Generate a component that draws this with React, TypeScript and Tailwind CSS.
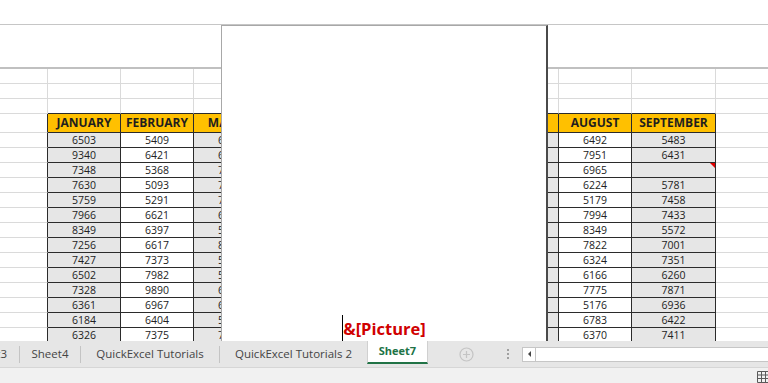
import React from 'react';

type Col = { w: string; month?: string; gray?: boolean; values?: string[] };

const cols: Col[] = [
  { w: 'w-[48px]' },
  { w: 'w-[73px]', month: 'JANUARY', gray: true, values: ['6503', '9340', '7348', '7630', '5759', '7966', '8349', '7256', '7427', '6502', '7328', '6361', '6184', '6326'] },
  { w: 'w-[73px]', month: 'FEBRUARY', values: ['5409', '6421', '5368', '5093', '5291', '6621', '6397', '6617', '7373', '7982', '9890', '6967', '6404', '7375'] },
  { w: 'w-[73px]', month: 'MARCH', gray: true, values: ['6120', '6874', '7012', '7455', '7301', '6590', '5842', '8013', '5267', '5731', '6088', '6649', '5390', '7204'] },
  // April to July sit under the header picture box, nothing of them shows
  { w: 'w-[73px]', month: 'APRIL' },
  { w: 'w-[73px]', month: 'MAY', gray: true },
  { w: 'w-[73px]', month: 'JUNE' },
  { w: 'w-[73px]', month: 'JULY', gray: true },
  { w: 'w-[73px]', month: 'AUGUST', values: ['6492', '7951', '6965', '6224', '5179', '7994', '8349', '7822', '6324', '6166', '7775', '5176', '6783', '6370'] },
  { w: 'w-[84px]', month: 'SEPTEMBER', gray: true, values: ['5483', '6431', '', '5781', '7458', '7433', '5572', '7001', '7351', '6260', '7871', '6936', '6422', '7411'] },
  { w: 'w-[80px]' },
];

type Kind = 'blank' | 'edge' | 'header' | 'data';

function Cell({ col, index, kind, row }: { col: Col; index: number; kind: Kind; row: number }) {
  const inTable = index >= 1 && index <= 9;
  const tableRow = kind === 'header' || kind === 'data';
  const bottom = inTable && kind !== 'blank' ? 'border-b-[#2b2b2b]' : 'border-b-[#dadada]';
  const right = tableRow && index <= 9 ? 'border-r-[#2b2b2b]' : 'border-r-[#dadada]';
  let bg = 'bg-white';
  if (inTable && kind === 'header') bg = 'bg-[#ffc000]';
  else if (inTable && kind === 'data' && col.gray) bg = 'bg-[#e6e6e6]';

  let content: React.ReactNode = null;
  if (inTable && kind === 'header') {
    content = <span className="text-[12px] font-bold text-[#1e1e1e] leading-none">{col.month}</span>;
  } else if (inTable && kind === 'data' && col.values) {
    content = <span className="text-[10.5px] text-[#222] leading-none">{col.values[row]}</span>;
  }

  const comment = index === 9 && kind === 'data' && row === 2;

  return (
    <div className={`relative flex shrink-0 items-center justify-center border-r border-b ${col.w} ${bottom} ${right} ${bg}`}>
      {content}
      {comment && (
        <span className="absolute right-0 top-0 h-0 w-0 border-t-[5px] border-l-[5px] border-t-[#e00000] border-l-transparent" />
      )}
    </div>
  );
}

function Row({ kind, row = 0 }: { kind: Kind; row?: number }) {
  const h = kind === 'header' ? 'h-[19px]' : 'h-[15px]';
  return (
    <div className={`flex shrink-0 ${h}`}>
      {cols.map((c, i) => (
        <Cell key={i} col={c} index={i} kind={kind} row={row} />
      ))}
    </div>
  );
}

export default function App() {
  return (
    <div className="relative flex h-[383px] w-[768px] flex-col overflow-hidden bg-white font-['Open_Sans',sans-serif]">
      {/* page margin + header band */}
      <div className="h-[25px] shrink-0 border-b border-[#c6c6c6]" />
      <div className="h-[44px] shrink-0 border-b-2 border-[#c0c0c0]" />

      {/* sheet grid */}
      <div className="flex h-[272px] shrink-0 flex-col overflow-hidden">
        <Row kind="blank" />
        <Row kind="blank" />
        <Row kind="edge" />
        <Row kind="header" />
        {Array.from({ length: 14 }).map((_, i) => (
          <Row key={i} kind="data" row={i} />
        ))}
      </div>

      {/* header picture box over the sheet */}
      <div className="absolute left-[221px] top-[25px] flex h-[316px] w-[327px] flex-col items-center justify-end border-l border-t border-r-2 border-l-[#a8a8a8] border-t-[#a8a8a8] border-r-[#4a4a4a] bg-white">
        <div className="flex items-end">
          <span className="h-[26px] w-px bg-black" />
          <span className="mb-[4px] text-[16.5px] font-bold leading-none text-[#d00000]">&amp;[Picture]</span>
        </div>
      </div>

      {/* sheet tabs */}
      <div className="flex h-[26px] shrink-0 items-center bg-[#e6e6e6] text-[11.5px] text-[#444]">
        <div className="flex w-[19px] shrink-0 justify-end overflow-hidden pr-[12px]">
          <span className="whitespace-nowrap">Sheet3</span>
        </div>
        <span className="h-[17px] w-px shrink-0 bg-[#c4c4c4]" />
        <div className="flex w-[60px] shrink-0 justify-center">Sheet4</div>
        <span className="h-[17px] w-px shrink-0 bg-[#c4c4c4]" />
        <div className="flex w-[138px] shrink-0 justify-center whitespace-nowrap">QuickExcel Tutorials</div>
        <span className="h-[17px] w-px shrink-0 bg-[#c4c4c4]" />
        <div className="flex w-[147px] shrink-0 justify-center whitespace-nowrap">QuickExcel Tutorials 2</div>
        <div className="flex h-[23px] w-[61px] shrink-0 items-center justify-center self-start border-x border-b-2 border-x-[#d0d0d0] border-b-[#217346] bg-white text-[11px] font-bold text-[#217346]">
          Sheet7
        </div>
        <svg className="ml-[31px] shrink-0" width="15" height="15" viewBox="0 0 15 15">
          <circle cx="7.5" cy="7.5" r="6.5" fill="none" stroke="#c4c4c4" strokeWidth="1.2" />
          <path d="M7.5 4v7M4 7.5h7" stroke="#c4c4c4" strokeWidth="1.2" />
        </svg>
        <div className="ml-[33px] flex shrink-0 flex-col gap-[2px]">
          <span className="h-[2px] w-[2px] bg-[#a0a0a0]" />
          <span className="h-[2px] w-[2px] bg-[#a0a0a0]" />
          <span className="h-[2px] w-[2px] bg-[#a0a0a0]" />
        </div>
        <div className="ml-[13px] flex h-[15px] flex-1 bg-white">
          <div className="flex w-[14px] shrink-0 items-center justify-center border border-[#c6c6c6]">
            <span className="h-0 w-0 border-y-[3px] border-r-[3px] border-y-transparent border-r-[#444]" />
          </div>
          <div className="flex-1 border-y border-[#c6c6c6]" />
        </div>
      </div>

      {/* status bar */}
      <div className="flex h-[16px] shrink-0 items-end justify-end border-t border-[#d6d6d6] bg-[#f1f1f1]">
        <svg className="mr-[-2px]" width="13" height="12" viewBox="0 0 13 12">
          <path d="M0.5 0.5h12v11h-12z M0.5 4h12 M0.5 7.5h12 M4.5 0.5v11 M8.5 0.5v11" fill="none" stroke="#5a5a5a" strokeWidth="1" />
        </svg>
      </div>
    </div>
  );
}
